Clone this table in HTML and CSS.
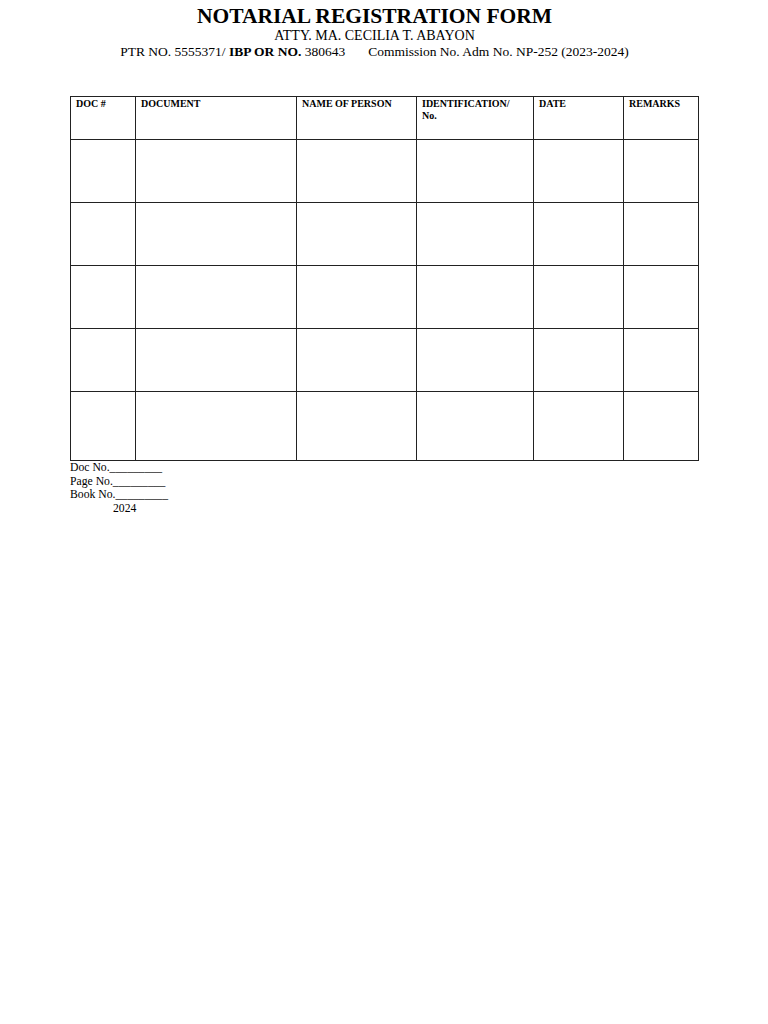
FILE: index.html
```html
<!DOCTYPE html>
<html>
<head>
<meta charset="utf-8">
<link rel="stylesheet" href="styles.css">
</head>
<body>
<div class="page">
  <header class="head">
    <h1 class="title">NOTARIAL REGISTRATION FORM</h1>
    <div class="sub name">ATTY. MA. CECILIA T. ABAYON</div>
    <div class="sub ptr">PTR NO. 5555371/ <b class="ibp">IBP OR NO.</b> 380643<span class="gap"></span>Commission No. Adm No. NP-252 (2023-2024)</div>
  </header>
  <table class="reg">
    <colgroup>
      <col class="c1"><col class="c2"><col class="c3"><col class="c4"><col class="c5"><col class="c6">
    </colgroup>
    <thead>
      <tr class="hrow">
        <th>DOC #</th><th>DOCUMENT</th><th>NAME OF PERSON</th><th>IDENTIFICATION/<br>No.</th><th>DATE</th><th>REMARKS</th>
      </tr>
    </thead>
    <tbody>
      <tr class="row"><td></td><td></td><td></td><td></td><td></td><td></td></tr>
      <tr class="row"><td></td><td></td><td></td><td></td><td></td><td></td></tr>
      <tr class="row"><td></td><td></td><td></td><td></td><td></td><td></td></tr>
      <tr class="row"><td></td><td></td><td></td><td></td><td></td><td></td></tr>
      <tr class="row last"><td></td><td></td><td></td><td></td><td></td><td></td></tr>
    </tbody>
  </table>
  <div class="foot">
    <div>Doc No._________</div>
    <div>Page No._________</div>
    <div>Book No._________</div>
    <div class="year">2024</div>
  </div>
</div>
</body>
</html>
```
FILE: styles.css
```css
html, body {
  margin: 0;
  padding: 0;
  background: #fff;
}
body {
  font-family: "Liberation Serif", "Times New Roman", serif;
  color: #000;
}
.page {
  width: 768px;
  height: 1024px;
  padding: 0 70px;
  box-sizing: border-box;
}
.head {
  text-align: center;
  padding-top: 4px;
  padding-right: 19px;
}
.title {
  margin: 0;
  font-size: 21.5px;
  font-weight: bold;
  line-height: 24px;
}
.sub {
  line-height: 16px;
}
.name {
  font-size: 14px;
}
.ptr {
  font-size: 13.5px;
}
.ibp {
  font-weight: bold;
}
.gap {
  display: inline-block;
  width: 23px;
}
.reg {
  margin-top: 36px;
  border-collapse: collapse;
  width: 628px;
  table-layout: fixed;
}
.c1 { width: 65px; }
.c2 { width: 161px; }
.c3 { width: 120px; }
.c4 { width: 117px; }
.c5 { width: 90px; }
.c6 { width: 75px; }
.reg th, .reg td {
  border: 1px solid #222;
  padding: 0;
}
.reg th {
  font-size: 10px;
  font-weight: bold;
  text-align: left;
  vertical-align: top;
  padding: 1px 4px 0 5px;
  line-height: 12px;
}
.hrow { height: 43px; }
.row { height: 63px; }
.row.last { height: 69px; }
.foot {
  font-size: 11.7px;
  line-height: 13.6px;
}
.year {
  padding-left: 43px;
}
```
